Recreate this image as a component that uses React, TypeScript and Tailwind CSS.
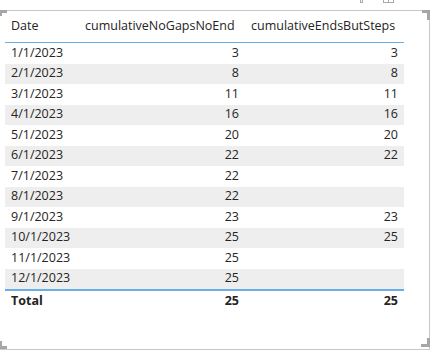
import React from 'react';

type Row = { date: string; a: number; b: number | null };

const rows: Row[] = [
  { date: '1/1/2023', a: 3, b: 3 },
  { date: '2/1/2023', a: 8, b: 8 },
  { date: '3/1/2023', a: 11, b: 11 },
  { date: '4/1/2023', a: 16, b: 16 },
  { date: '5/1/2023', a: 20, b: 20 },
  { date: '6/1/2023', a: 22, b: 22 },
  { date: '7/1/2023', a: 22, b: null },
  { date: '8/1/2023', a: 22, b: null },
  { date: '9/1/2023', a: 23, b: 23 },
  { date: '10/1/2023', a: 25, b: 25 },
  { date: '11/1/2023', a: 25, b: null },
  { date: '12/1/2023', a: 25, b: null },
];

const cols = 'grid grid-cols-[74px_166px_159px] items-center';

const App: React.FC = () => {
  return (
    <div
      className="relative w-[434px] h-[356px] bg-white overflow-hidden pt-[10px] text-[#252423]"
      style={{ fontFamily: '"Open Sans", "Noto Sans", sans-serif' }}
    >
      {/* visual header icons, cut off at the top of the page */}
      <div className="absolute left-[360px] top-0 w-[3px] h-[3px] border-x border-b border-[#a8a8a8]" />
      <div className="absolute left-[383px] top-0 w-[11px] h-[3px] border-x border-b border-[#a8a8a8]">
        <div className="mx-auto w-px h-full bg-[#a8a8a8]" />
      </div>

      <div className="relative w-[430px] h-[340px] border-t border-r border-b border-[#c8c8c8] pl-[5px] pt-[2px]">
        {/* corner resize marks */}
        <div className="absolute left-0 -top-px w-[7px] h-[3px] bg-[#a6a6a6]" />
        <div className="absolute left-0 -top-px w-[2px] h-[6px] bg-[#a6a6a6]" />
        <div className="absolute -right-px -top-px w-[8px] h-[3px] bg-[#a6a6a6]" />
        <div className="absolute -right-px -top-px w-[3px] h-[10px] bg-[#a6a6a6]" />
        <div className="absolute -right-px bottom-[2px] w-[9px] h-[3px] bg-[#a6a6a6]" />
        <div className="absolute -right-px bottom-[2px] w-[3px] h-[9px] bg-[#a6a6a6]" />
        <div className="absolute left-0 bottom-0 w-[7px] h-[3px] bg-[#a6a6a6]" />
        <div className="absolute left-0 bottom-0 w-[2px] h-[8px] bg-[#a6a6a6]" />

        <div className="w-[399px] text-[12.5px]">
          <div className={`${cols} h-[30px] border-b border-[#6aaee8] pb-[2px]`}>
            <div className="pl-[6px] whitespace-nowrap">Date</div>
            <div className="pl-[6px] whitespace-nowrap">cumulativeNoGapsNoEnd</div>
            <div className="pl-[6px] whitespace-nowrap">cumulativeEndsButSteps</div>
          </div>
          {rows.map((r, i) => (
            <div
              key={r.date}
              className={`${cols} h-[20.5px] ${i % 2 === 1 ? 'bg-[#eeeeee]' : 'bg-white'}`}
            >
              <div className="pl-[6px] whitespace-nowrap">{r.date}</div>
              <div className="pr-[6px] text-right">{r.a}</div>
              <div className="pr-[6px] text-right">{r.b ?? ''}</div>
            </div>
          ))}
          <div className={`${cols} h-[22px] border-t-2 border-[#6aaee8] font-bold`}>
            <div className="pl-[6px]">Total</div>
            <div className="pr-[6px] text-right">25</div>
            <div className="pr-[6px] text-right">25</div>
          </div>
        </div>
      </div>
    </div>
  );
};

export default App;
